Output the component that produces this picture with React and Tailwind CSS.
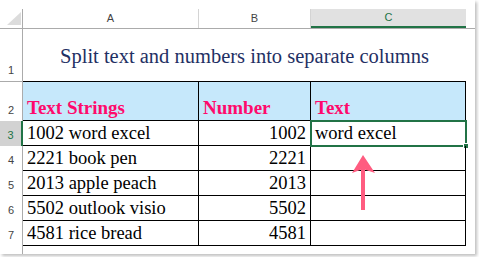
import React from 'react';

const rows = [
  { n: 3, text: '1002 word excel', num: '1002', out: 'word excel', active: true },
  { n: 4, text: '2221 book pen', num: '2221', out: '' },
  { n: 5, text: '2013 apple peach', num: '2013', out: '' },
  { n: 6, text: '5502 outlook visio', num: '5502', out: '' },
  { n: 7, text: '4581 rice bread', num: '4581', out: '' },
];

const serif = "font-['Liberation_Serif','Times_New_Roman',serif]";
const sans = "font-['Liberation_Sans',Arial,sans-serif]";

const RowHead = ({ n, active, className = '' }) => (
  <div
    className={`w-[23px] shrink-0 flex items-end justify-center pb-[3px] text-[11px] ${sans} ${
      active
        ? 'bg-[#d2d2d2] text-[#217346] border-r-2 border-[#217346]'
        : 'text-[#444] border-r border-[#ababab]'
    } ${className}`}
  >
    {n}
  </div>
);

export default function App() {
  return (
    <div className="w-[479px] h-[257px] bg-white overflow-hidden">
      <div className="w-[475px] h-[254px] bg-white shadow-[2px_2px_3px_rgba(0,0,0,0.25)] overflow-hidden relative">
        <div className="h-[9px]" />

        {/* column headers */}
        <div className={`flex h-[20px] border-b border-[#ababab] text-[11px] text-[#444] ${sans}`}>
          <div className="w-[23px] shrink-0 border-r border-[#ababab] flex items-end justify-end pr-[1px] pb-[3px]">
            <svg width="14" height="13" viewBox="0 0 14 13">
              <polygon points="14,0 14,13 0,13" fill="#dcdcdc" />
            </svg>
          </div>
          <div className="w-[176px] shrink-0 border-r border-[#d4d4d4] flex items-center justify-center">A</div>
          <div className="w-[112px] shrink-0 border-r border-[#d4d4d4] flex items-center justify-center">B</div>
          <div className="w-[155px] shrink-0 bg-[#e1e1e1] text-[#217346] border-b-2 border-[#217346] flex items-center justify-center">
            C
          </div>
          <div className="flex-1" />
        </div>

        {/* title row */}
        <div className="flex h-[52px]">
          <RowHead n={1} />
          <div className={`w-[443px] shrink-0 flex items-center justify-center pt-[2px] text-[20.5px] text-[#1f3064] ${serif}`}>
            Split text and numbers into separate columns
          </div>
        </div>

        {/* header row */}
        <div className="flex h-[40px]">
          <RowHead n={2} className="border-t border-t-[#ababab]" />
          <div className={`flex border-y border-black bg-[#c6e8fb] text-[19px] leading-[20px] font-bold text-[#ff0a6c] ${serif}`}>
            <div className="w-[176px] border-r border-black flex items-end pl-[4px] pb-[2px]">Text Strings</div>
            <div className="w-[112px] border-r border-black flex items-end pl-[4px] pb-[2px]">Number</div>
            <div className="w-[155px] border-r border-black flex items-end pl-[4px] pb-[2px]">Text</div>
          </div>
        </div>

        {rows.map((r) => (
          <div key={r.n} className="flex h-[25px]">
            <RowHead n={r.n} active={r.active} />
            <div className={`flex border-b border-black text-[18.5px] text-black ${serif}`}>
              <div className="w-[176px] border-r border-black flex items-end pl-[4px] leading-[24px]">{r.text}</div>
              <div className="w-[112px] border-r border-black flex items-end justify-end pr-[4px] leading-[24px]">{r.num}</div>
              <div className="w-[155px] border-r border-black flex items-end pl-[4px] leading-[24px] relative">
                {r.out}
                {r.active && (
                  <>
                    <div className="absolute left-[-1px] top-[-1px] right-[-2px] bottom-[-2px] border-2 border-[#217346]" />
                    <div className="absolute right-[-4px] bottom-[-4px] w-[6px] h-[6px] bg-[#217346] border border-white" />
                  </>
                )}
              </div>
            </div>
          </div>
        ))}

        {/* partial row 8 */}
        <div className="flex h-[25px]">
          <RowHead n={8} className="pb-0 items-start pt-[4px]" />
        </div>

        {/* arrow pointing to the result */}
        <svg className="absolute left-[351px] top-[154px]" width="26" height="58" viewBox="0 0 26 58">
          <polygon points="12,1 24,19 12,15 1,19" fill="#ff5c80" />
          <rect x="10" y="13" width="4" height="43" fill="#ff5c80" />
        </svg>
      </div>
    </div>
  );
}
